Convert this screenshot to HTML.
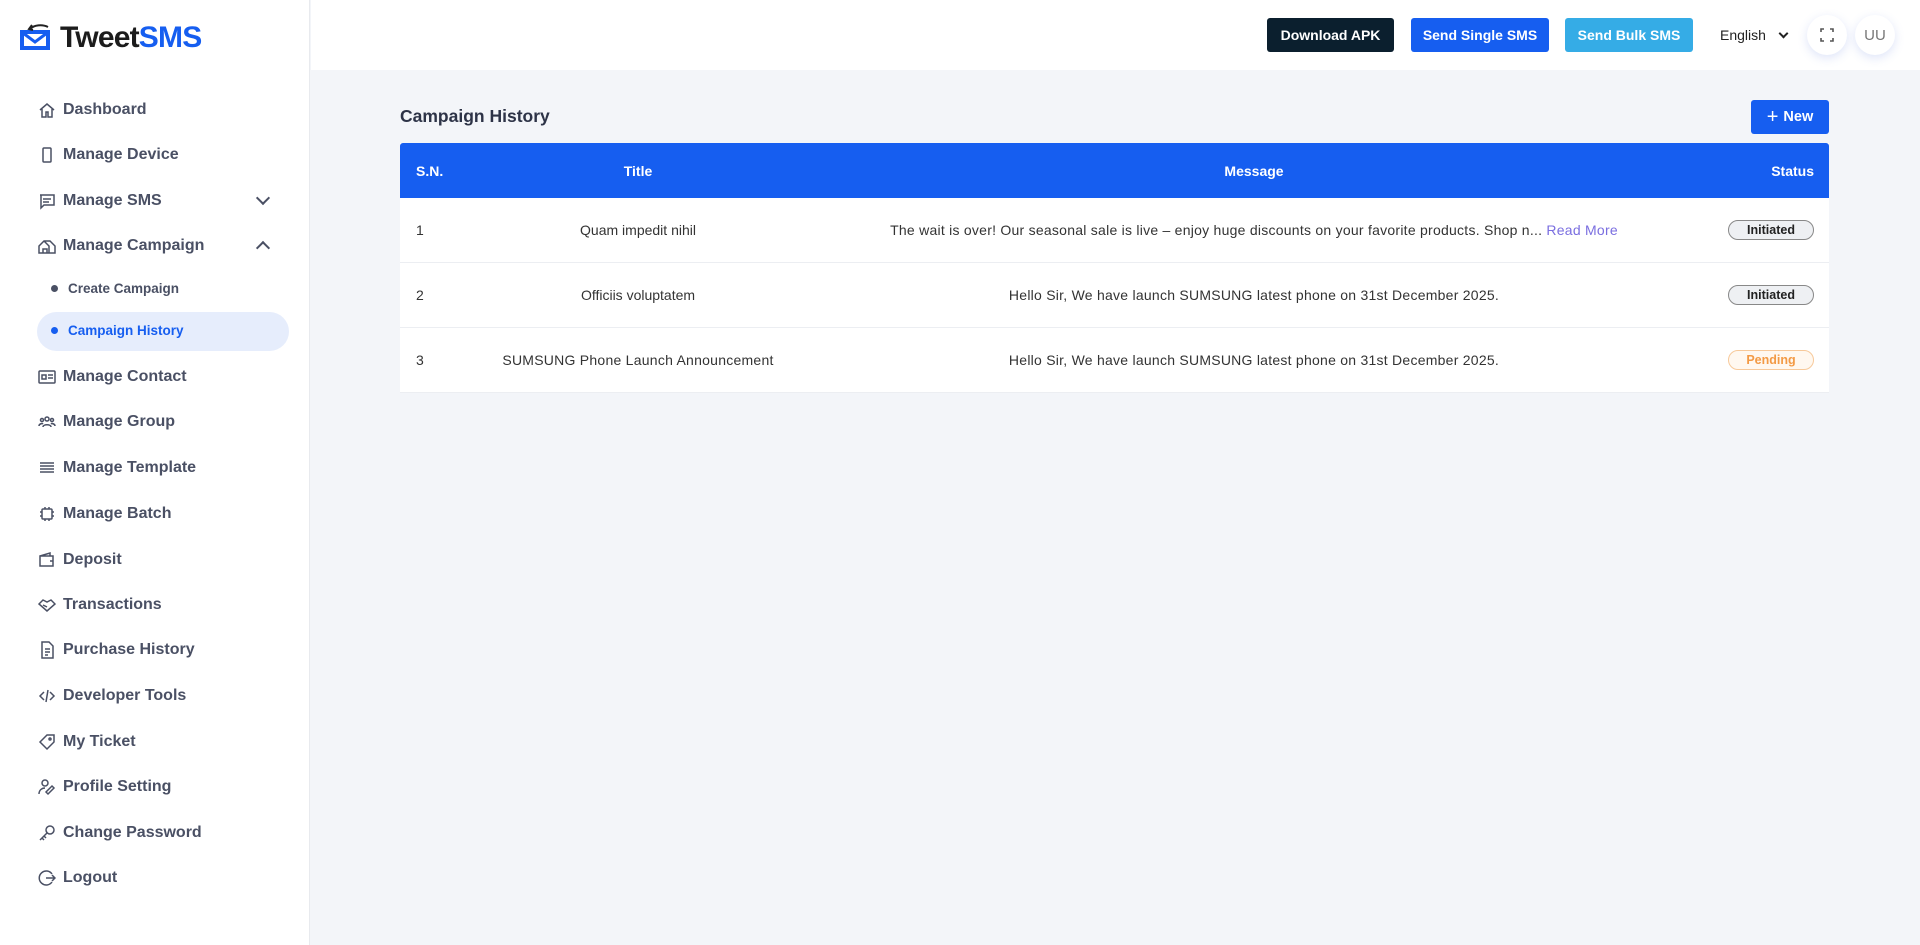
<!DOCTYPE html>
<html><head><meta charset="utf-8"><style>
*{box-sizing:border-box;margin:0;padding:0}
body{width:1920px;height:945px;overflow:hidden;background:#f3f5f9;font-family:"Liberation Sans",sans-serif;color:#333;position:relative}
.sb{position:absolute;left:0;top:0;width:310px;height:945px;background:#fff;border-right:1px solid #e8eaee}
.logo{position:absolute;left:20px;top:21px;display:flex;align-items:center;font-size:30px;font-weight:700;letter-spacing:-0.8px;color:#1c1c1c}
.logo span{color:#165ef0}
.item{position:absolute;left:38px;display:flex;align-items:center;font-size:16px;font-weight:700;color:#4a5064;height:24px}
.item svg{width:18px;height:18px;margin-right:7px;stroke:#4a5064;fill:none;stroke-width:1.5}
.sub{position:absolute;left:51px;font-size:13.5px;font-weight:700;color:#4a5064;display:flex;align-items:center}
.sub i{width:7px;height:7px;border-radius:50%;background:#4a5064;margin-right:10px;display:inline-block}
.pill{position:absolute;left:37px;top:312px;width:252px;height:39px;border-radius:20px;background:#e6edfc}
.chev{position:absolute;left:258px;width:10px;height:10px;border-right:2px solid #4a5064;border-bottom:2px solid #4a5064}
.hdr{position:absolute;left:311px;top:0;right:0;height:70px;background:#fff}
.btn{position:absolute;top:18px;height:34px;border-radius:3px;color:#fff;font-size:14px;font-weight:700;display:flex;align-items:center;justify-content:center}
.circ{position:absolute;top:15px;width:40px;height:40px;border-radius:50%;background:#fff;box-shadow:0 3px 10px rgba(90,120,220,.2);display:flex;align-items:center;justify-content:center;font-size:15px;color:#777}
.tbl{position:absolute;left:400px;top:143px;width:1429px;background:#fff}
.th{height:55px;background:#165ef0;color:#fff;font-weight:700;font-size:14px;position:relative;border-radius:3px 3px 0 0}
.row{height:65px;border-bottom:1px solid #eceef2;position:relative;font-size:14px;color:#333}
.c{position:absolute;top:50%;transform:translateY(-50%);white-space:nowrap}
.badge{position:absolute;right:15px;top:50%;transform:translateY(-50%);height:20px;border-radius:10px;font-size:12.5px;font-weight:700;display:flex;align-items:center;justify-content:center;width:86px}
</style></head><body>
<div class="sb">
<div class="logo"><svg width="36" height="30" viewBox="0 0 36 30" style="margin-right:4px"><path d="M2 9h26v16H2z" fill="none" stroke="#165ef0" stroke-width="4"/><path d="M3 10l12 9 12-9" fill="none" stroke="#165ef0" stroke-width="3"/><path d="M10 6c4-4 12-5 18-2" fill="none" stroke="#222" stroke-width="2"/><path d="M12 2l-3 4 4 1" fill="none" stroke="#222" stroke-width="2"/></svg>Tweet<span>SMS</span></div>
<div class="pill"></div>
<div class="item" style="top:98px"><svg viewBox="0 0 18 18"><path d="M2 9l7-6 7 6M4 8v8h4v-5h2v5h4V8"/></svg>Dashboard</div>
<div class="item" style="top:143px"><svg viewBox="0 0 18 18"><rect x="5" y="2" width="8" height="14" rx="1"/></svg>Manage Device</div>
<div class="item" style="top:189px"><svg viewBox="0 0 18 18"><path d="M2 3h14v10H6l-3 3V3zM5 7h8M5 10h6"/></svg>Manage SMS</div>
<div class="chev" style="top:193px;transform:rotate(45deg)"></div>
<div class="item" style="top:234px"><svg viewBox="0 0 18 18"><path d="M1 9l5-5h6l5 5v7H1zM6 4l5 5v7M9 16v-4h-4v4"/></svg>Manage Campaign</div>
<div class="chev" style="top:243px;transform:rotate(-135deg)"></div>
<div class="sub" style="top:281px"><i></i>Create Campaign</div>
<div class="sub" style="top:323px;color:#165ef0"><i style="background:#165ef0"></i>Campaign History</div>
<div class="item" style="top:365px"><svg viewBox="0 0 18 18"><rect x="1" y="3" width="16" height="12" rx="1"/><path d="M4 7h4v4H4zM10 7h5M10 10h5"/></svg>Manage Contact</div>
<div class="item" style="top:410px"><svg viewBox="0 0 18 18"><circle cx="9" cy="6" r="2"/><circle cx="4" cy="7" r="1.5"/><circle cx="14" cy="7" r="1.5"/><path d="M5 14c0-3 8-3 8 0M1 13c0-2 3-3 4-2M17 13c0-2-3-3-4-2"/></svg>Manage Group</div>
<div class="item" style="top:456px"><svg viewBox="0 0 18 18"><path d="M2 4h14M2 7h14M2 10h14M2 13h14"/></svg>Manage Template</div>
<div class="item" style="top:502px"><svg viewBox="0 0 18 18"><rect x="4" y="4" width="10" height="10" rx="1"/><path d="M7 2v2M11 2v2M7 14v2M11 14v2M2 7h2M2 11h2M14 7h2M14 11h2"/></svg>Manage Batch</div>
<div class="item" style="top:548px"><svg viewBox="0 0 18 18"><path d="M2 5h13v10H2zM2 5l10-3v3M12 10h3"/></svg>Deposit</div>
<div class="item" style="top:593px"><svg viewBox="0 0 18 18"><path d="M1 8l4-4 4 2 4-2 4 4-8 7zM5 9l4 2"/></svg>Transactions</div>
<div class="item" style="top:638px"><svg viewBox="0 0 18 18"><path d="M4 1h7l4 4v12H4zM7 8h5M7 11h5M7 14h3"/></svg>Purchase History</div>
<div class="item" style="top:684px"><svg viewBox="0 0 18 18"><path d="M6 5L2 9l4 4M12 5l4 4-4 4M10 3l-2 12"/></svg>Developer Tools</div>
<div class="item" style="top:730px"><svg viewBox="0 0 18 18"><path d="M2 9l7-7h7v7l-7 7z"/><circle cx="12" cy="6" r="1"/></svg>My Ticket</div>
<div class="item" style="top:775px"><svg viewBox="0 0 18 18"><circle cx="7" cy="5" r="3"/><path d="M1 16c0-4 3-6 6-6M10 16l6-6-2-2-6 6z"/></svg>Profile Setting</div>
<div class="item" style="top:821px"><svg viewBox="0 0 18 18"><circle cx="12" cy="6" r="4"/><path d="M9 9l-7 7M4 14l2 2M6 12l2 2"/></svg>Change Password</div>
<div class="item" style="top:866px"><svg viewBox="0 0 18 18"><path d="M14 5a7 7 0 1 0 0 8M8 9h9M14 6l3 3-3 3"/></svg>Logout</div>
</div>
<div class="hdr"></div>
<div class="btn" style="left:1267px;width:127px;background:#0b1f2e">Download APK</div>
<div class="btn" style="left:1411px;width:138px;background:#165ef0">Send Single SMS</div>
<div class="btn" style="left:1565px;width:128px;background:#35ace6">Send Bulk SMS</div>
<div style="position:absolute;left:1720px;top:27px;font-size:14px;color:#222">English <span style="display:inline-block;width:7px;height:7px;border-right:2px solid #222;border-bottom:2px solid #222;transform:rotate(45deg);margin-left:10px;position:relative;top:-3px"></span></div>
<div class="circ" style="left:1807px"><svg width="14" height="14" viewBox="0 0 14 14" fill="none" stroke="#555" stroke-width="1.6"><path d="M1 4V1h3M10 1h3v3M13 10v3h-3M4 13H1v-3"/></svg></div>
<div class="circ" style="left:1855px">UU</div>
<div style="position:absolute;left:400px;top:106px;font-size:17.5px;font-weight:700;color:#2d3347">Campaign History</div>
<div class="btn" style="left:1751px;top:100px;width:78px;background:#165ef0;font-size:14.5px"><span style="font-size:20px;font-weight:400;margin-right:5px">+</span>New</div>
<div class="tbl">
<div class="th"><span class="c" style="left:16px">S.N.</span><span class="c" style="left:238px;transform:translate(-50%,-50%)">Title</span><span class="c" style="left:854px;transform:translate(-50%,-50%)">Message</span><span class="c" style="right:15px">Status</span></div>
<div class="row"><span class="c" style="left:16px">1</span><span class="c" style="left:238px;transform:translate(-50%,-50%)">Quam impedit nihil</span><span class="c" style="left:854px;transform:translate(-50%,-50%);letter-spacing:0.25px">The wait is over! Our seasonal sale is live – enjoy huge discounts on your favorite products. Shop n... <span style="color:#7a6ee0">Read More</span></span><span class="badge" style="background:#eef0f3;border:1px solid #888;color:#222">Initiated</span></div>
<div class="row"><span class="c" style="left:16px">2</span><span class="c" style="left:238px;transform:translate(-50%,-50%)">Officiis voluptatem</span><span class="c" style="left:854px;transform:translate(-50%,-50%);letter-spacing:0.25px">Hello Sir, We have launch SUMSUNG latest phone on 31st December 2025.</span><span class="badge" style="background:#eef0f3;border:1px solid #888;color:#222">Initiated</span></div>
<div class="row"><span class="c" style="left:16px">3</span><span class="c" style="left:238px;transform:translate(-50%,-50%);letter-spacing:0.25px">SUMSUNG Phone Launch Announcement</span><span class="c" style="left:854px;transform:translate(-50%,-50%);letter-spacing:0.25px">Hello Sir, We have launch SUMSUNG latest phone on 31st December 2025.</span><span class="badge" style="background:#fff8f0;border:1px solid #f7c99a;color:#f39a45">Pending</span></div>
</div>
</body></html>
